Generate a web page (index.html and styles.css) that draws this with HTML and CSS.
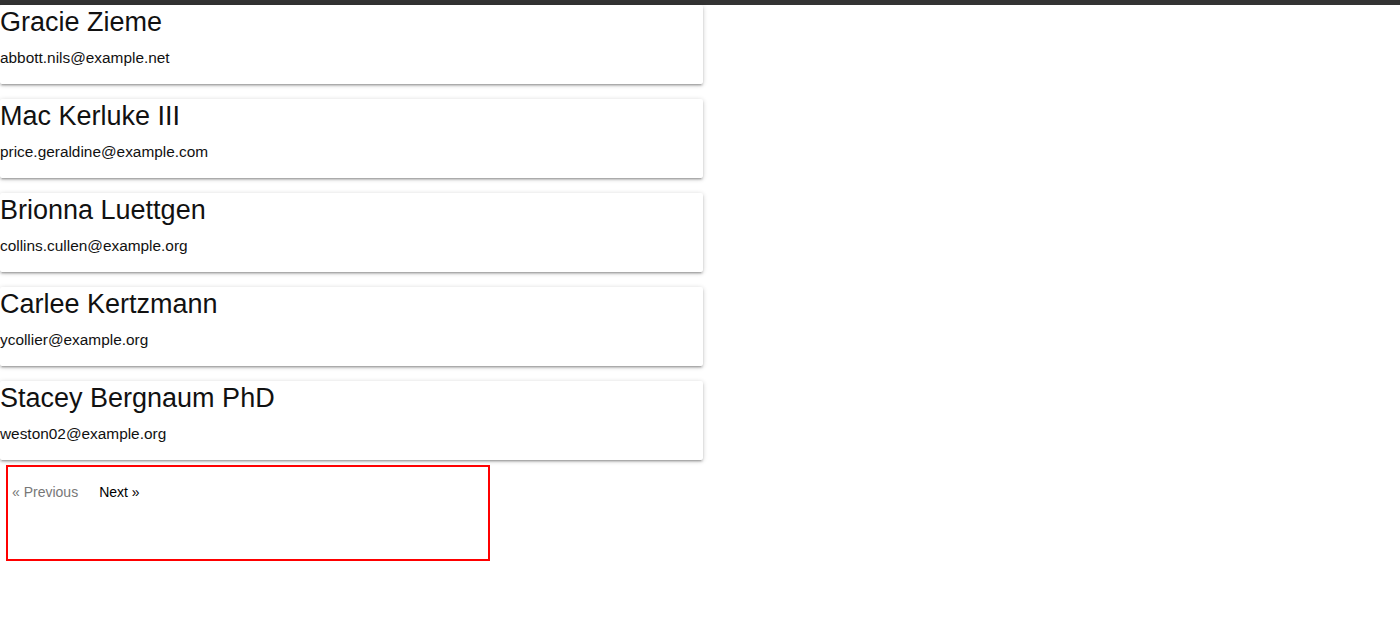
FILE: index.html
```html
<!DOCTYPE html>
<html lang="en">
<head>
    <meta charset="UTF-8">
    <meta name="viewport" content="width=device-width, initial-scale=1.0">
    <title>Users</title>
    <link rel="stylesheet" href="styles.css">
</head>
<body>
    <div class="topbar"></div>
    <div class="users">
        <div class="card">
            <h2 class="name">Gracie Zieme</h2>
            <p class="email">abbott.nils@example.net</p>
        </div>
        <div class="card">
            <h2 class="name">Mac Kerluke III</h2>
            <p class="email">price.geraldine@example.com</p>
        </div>
        <div class="card">
            <h2 class="name">Brionna Luettgen</h2>
            <p class="email">collins.cullen@example.org</p>
        </div>
        <div class="card">
            <h2 class="name">Carlee Kertzmann</h2>
            <p class="email">ycollier@example.org</p>
        </div>
        <div class="card">
            <h2 class="name">Stacey Bergnaum PhD</h2>
            <p class="email">weston02@example.org</p>
        </div>
    </div>
    <div class="pagination">
        <span class="page-link disabled">&laquo; Previous</span>
        <a class="page-link" href="#">Next &raquo;</a>
    </div>
</body>
</html>
```

FILE: styles.css
```css
body {
    font-family: "Liberation Sans", Arial, sans-serif;
    background-color: #fff;
    color: #111;
    margin: 0;
}

.topbar {
    height: 5px;
    background-color: #333;
}

.users {
    width: 703px;
}

.card {
    height: 79px;
    box-sizing: border-box;
    padding-top: 2px;
    margin-bottom: 15px;
    border-radius: 2px;
    background-color: #fff;
    box-shadow: 0 2px 2px 0 rgba(0, 0, 0, 0.14), 0 3px 1px -2px rgba(0, 0, 0, 0.12), 0 1px 5px 0 rgba(0, 0, 0, 0.2);
}

.name {
    margin: 0;
    font-size: 27px;
    font-weight: normal;
    line-height: 30px;
}

.email {
    margin: 12px 0 0;
    font-size: 15.4px;
    line-height: 18px;
}

.pagination {
    width: 484px;
    height: 96px;
    box-sizing: border-box;
    margin: -10px 0 0 6px;
    padding: 17px 4px 0;
    border: 2px solid #f00;
    font-size: 14px;
    line-height: 16px;
    display: flex;
    align-items: flex-start;
    gap: 21px;
}

.page-link {
    color: #000;
    text-decoration: none;
}

.disabled {
    color: #777;
}
```
